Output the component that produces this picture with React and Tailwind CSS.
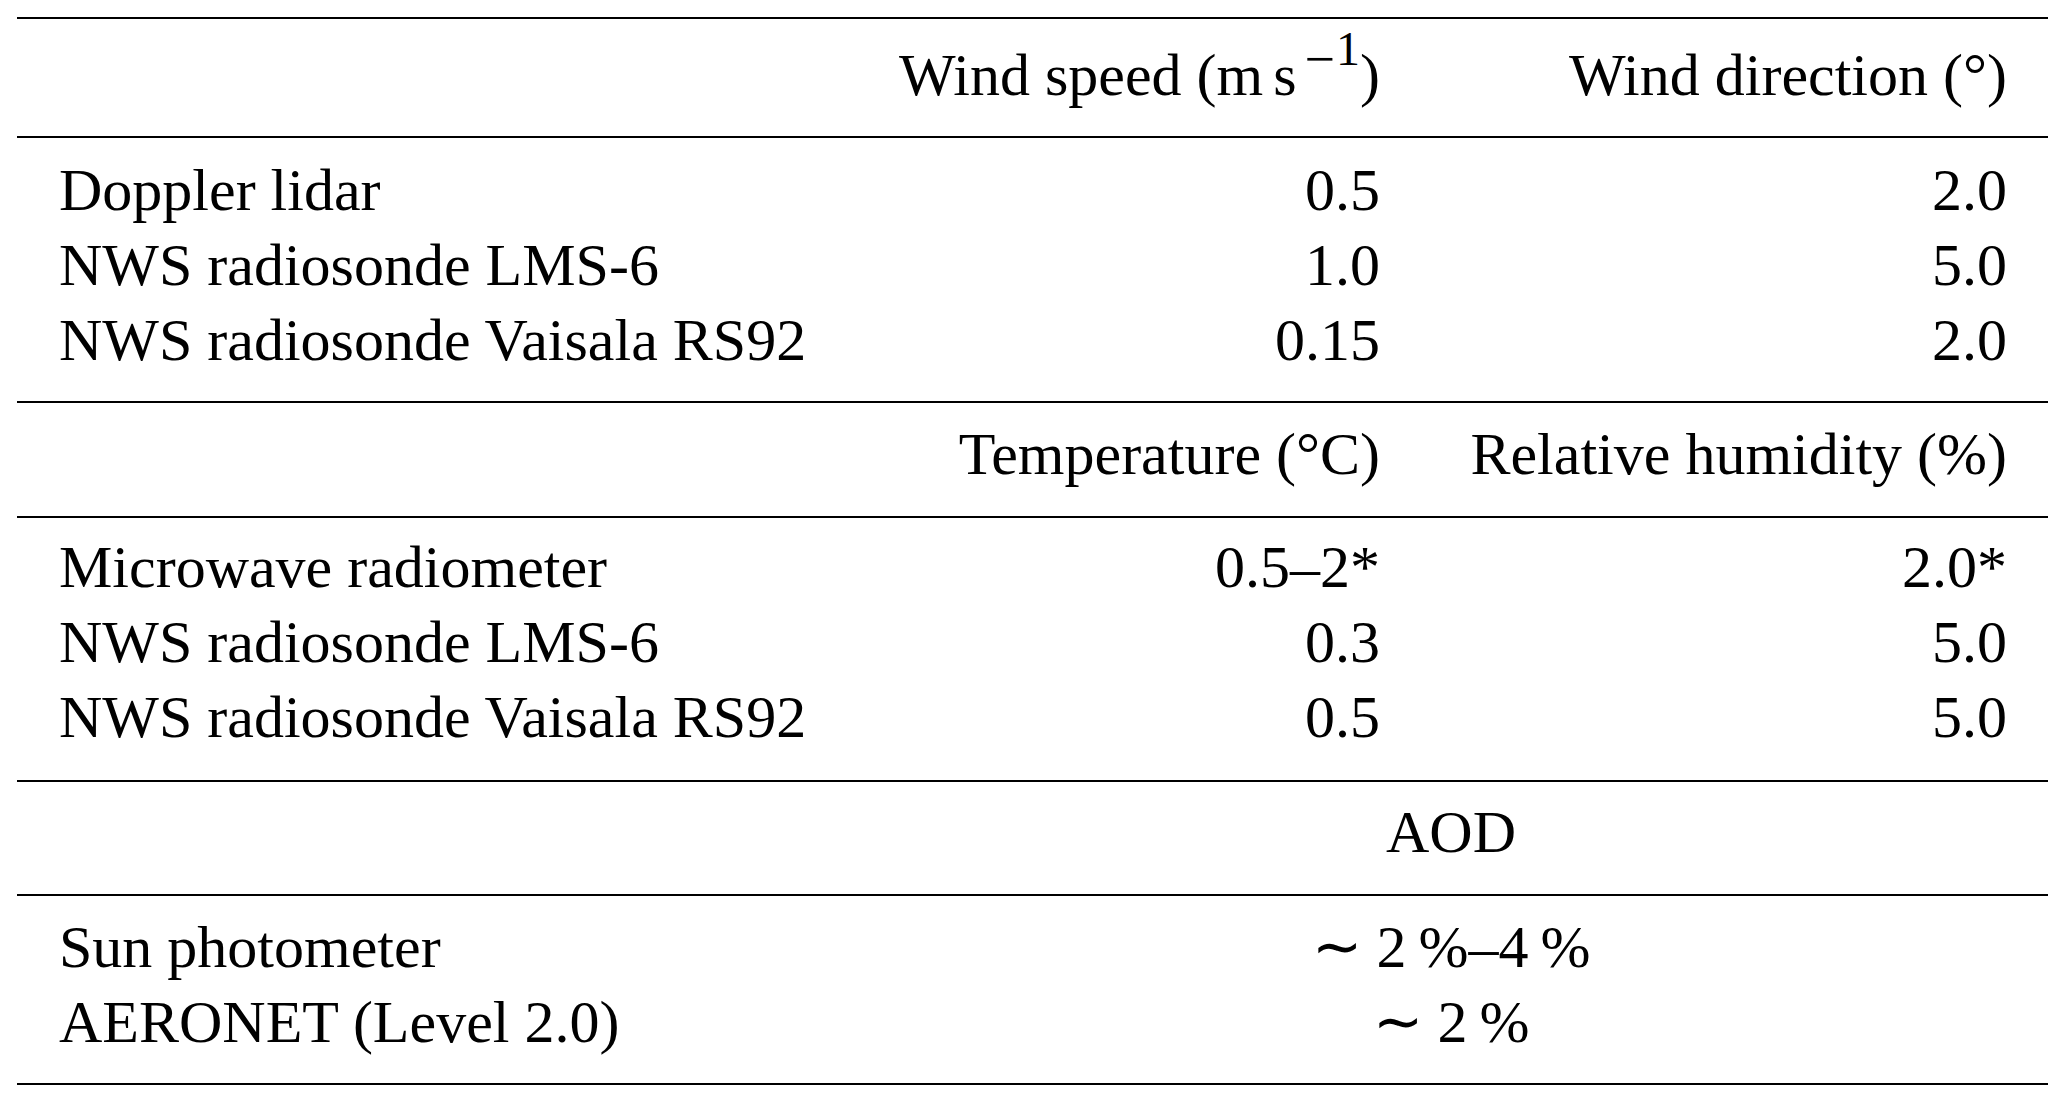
import React from "react";

function Rule() {
  return <div className="h-[2px] bg-black" />;
}

function Row({ children, className = "" }) {
  return (
    <div className={`grid grid-cols-[837px_568px_626px] whitespace-nowrap ${className}`}>
      {children}
    </div>
  );
}

function DataRows({ rows, pad }) {
  return (
    <div className={pad}>
      {rows.map((r) => (
        <Row key={r[0]}>
          <div className="pl-[42px]">{r[0]}</div>
          <div className="pr-[42px] text-right">{r[1]}</div>
          <div className="pr-[41px] text-right">{r[2]}</div>
        </Row>
      ))}
    </div>
  );
}

export default function App() {
  return (
    <div className="min-h-screen bg-white pl-[17px] pt-[17px]">
      <div className="w-[2031px] font-['Liberation_Serif',serif] text-[60px] leading-[75px] text-black">
        <Rule />
        {/* wind */}
        <Row className="pt-[19px] pb-[23px]">
          <div />
          <div className="pr-[42px] text-right">
            Wind speed (m<span className="inline-block w-[10px]" />s
            <span className="relative bottom-[18px] ml-[8px] text-[54px] leading-none">−</span>
            <span className="relative bottom-[30px] ml-[1px] text-[48px] leading-none">1</span>)
          </div>
          <div className="pr-[41px] text-right">Wind direction (°)</div>
        </Row>
        <Rule />
        <DataRows
          pad="pt-[15px] pb-[23px]"
          rows={[
            ["Doppler lidar", "0.5", "2.0"],
            ["NWS radiosonde LMS-6", "1.0", "5.0"],
            ["NWS radiosonde Vaisala RS92", "0.15", "2.0"],
          ]}
        />
        <Rule />

        {/* temperature / humidity */}
        <Row className="pt-[14px] pb-[24px]">
          <div />
          <div className="pr-[42px] text-right">Temperature (°C)</div>
          <div className="pr-[41px] text-right">Relative humidity (%)</div>
        </Row>
        <Rule />
        <DataRows
          pad="pt-[12px] pb-[25px]"
          rows={[
            ["Microwave radiometer", "0.5–2*", "2.0*"],
            ["NWS radiosonde LMS-6", "0.3", "5.0"],
            ["NWS radiosonde Vaisala RS92", "0.5", "5.0"],
          ]}
        />
        <Rule />

        {/* aerosol optical depth */}
        <Row className="pt-[13px] pb-[24px]">
          <div />
          <div className="col-span-2 text-center">AOD</div>
        </Row>
        <Rule />
        <div className="pt-[14px] pb-[23px]">
          <Row>
            <div className="pl-[42px]">Sun photometer</div>
            <div className="col-span-2 text-center">∼ 2{"\u2009"}%–4{"\u2009"}%</div>
          </Row>
          <Row>
            <div className="pl-[42px]">AERONET (Level 2.0)</div>
            <div className="col-span-2 text-center">∼ 2{"\u2009"}%</div>
          </Row>
        </div>
        <Rule />
      </div>
    </div>
  );
}
